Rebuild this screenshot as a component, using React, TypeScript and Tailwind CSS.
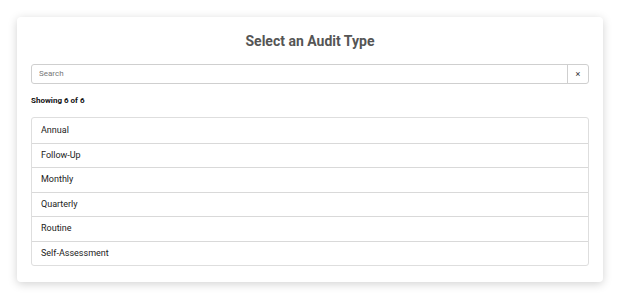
import React from 'react';

const auditTypes = ["Annual", "Follow-Up", "Monthly", "Quarterly", "Routine", "Self-Assessment"];

export default function App() {
  return (
    <div className="min-h-screen bg-white pt-[17px] pl-[17px] pr-[20px] font-['Roboto',sans-serif]">
      <div className="rounded-[4px] bg-white px-[14px] pt-[16px] pb-[16px] shadow-[0_2px_10px_rgba(0,0,0,0.18)]">
        <h2 className="text-center text-[14px] leading-[17px] font-bold text-[#555555]">
          Select an Audit Type
        </h2>

        <div className="mt-[14px] flex h-[20px] rounded-[3px] border border-[#cfcfcf]">
          <input
            className="flex-1 px-[7px] text-[8px] text-[#333] outline-none placeholder:text-[#777]"
            placeholder="Search"
          />
          <button className="w-[21px] border-l border-[#cfcfcf] text-[9px] leading-none text-[#333]">
            ×
          </button>
        </div>

        <p className="mt-[12px] text-[8px] leading-[10px] font-bold text-[#111]">Showing 6 of 6</p>

        <div className="mt-[11px] rounded-[3px] border border-[#dedede]">
          {auditTypes.map((type, index) => (
            <div
              key={type}
              className={`h-[24.5px] flex items-center px-[9px] text-[9px] text-[#222] ${index > 0 ? 'border-t border-[#d9d9d9]' : ''}`}
            >
              {type}
            </div>
          ))}
        </div>
      </div>
    </div>
  );
}
